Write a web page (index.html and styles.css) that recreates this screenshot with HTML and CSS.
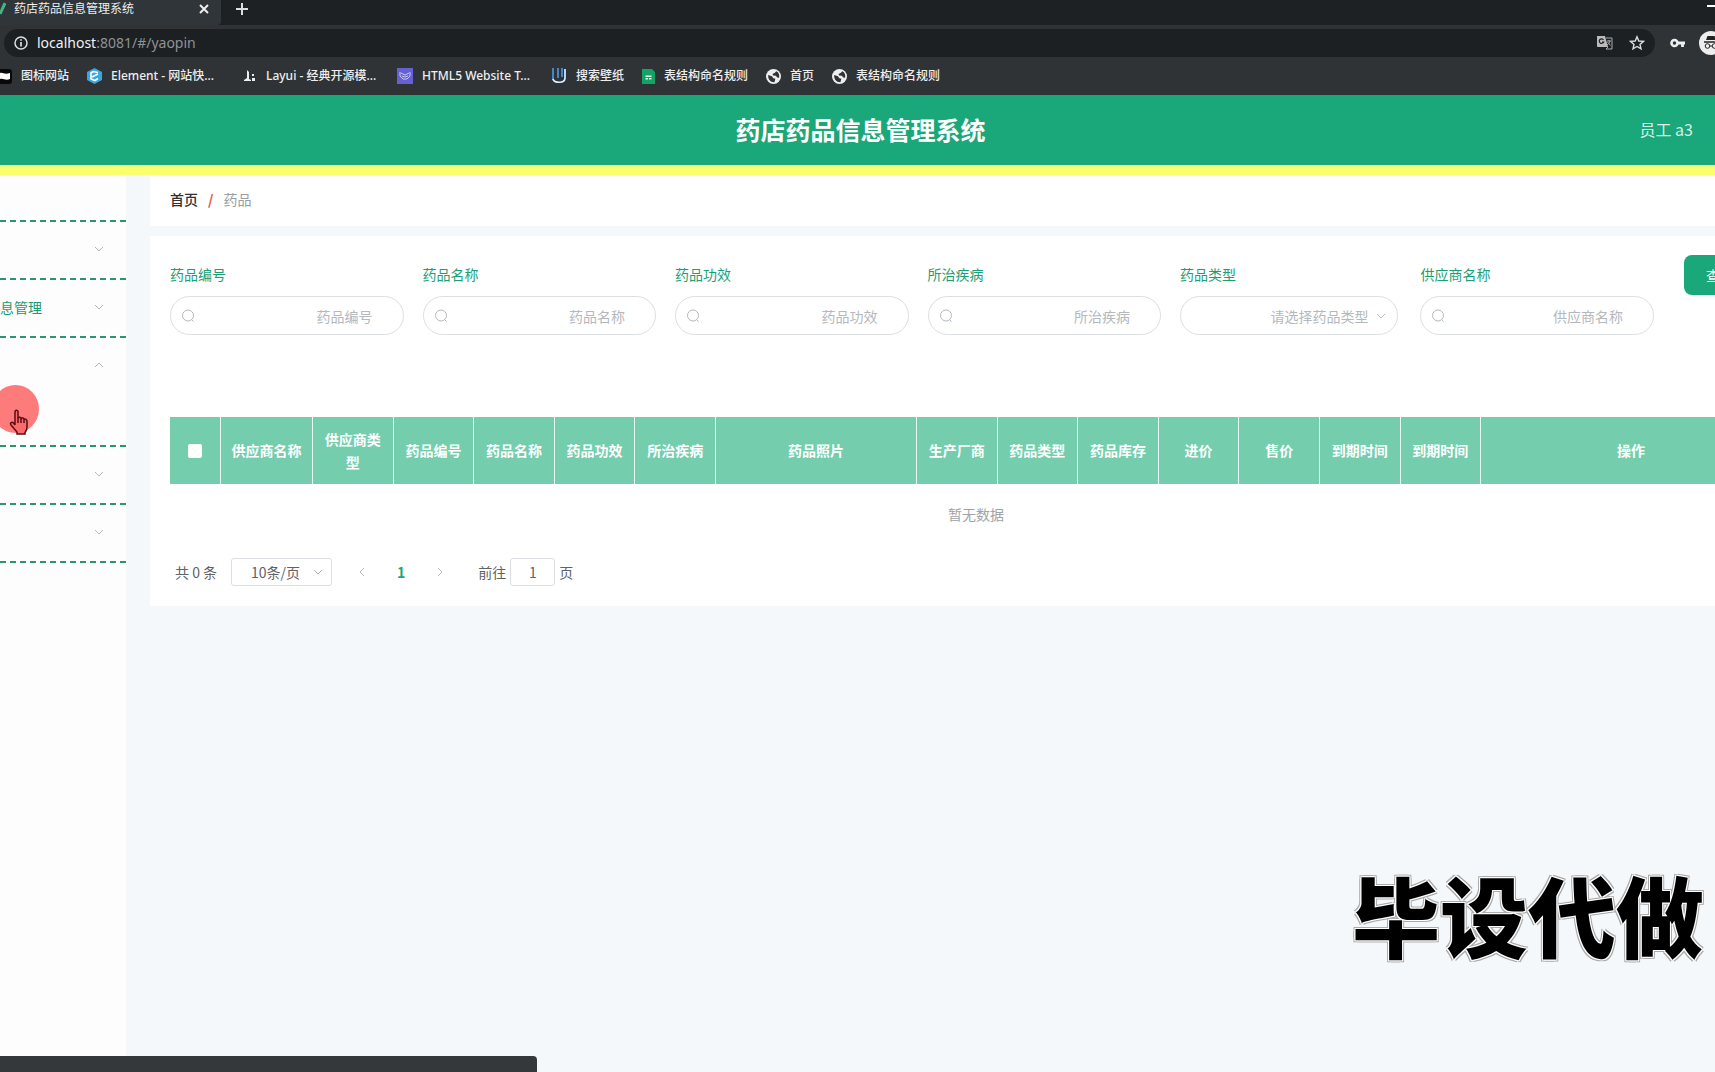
FILE: index.html
```html
<!DOCTYPE html>
<html lang="zh-CN">
<head>
<meta charset="utf-8">
<meta name="viewport" content="width=device-width, initial-scale=1">
<title>药店药品信息管理系统</title>
<link rel="stylesheet" href="styles.css">
</head>
<body>
<svg class="defs" aria-hidden="true">
  <symbol id="chev" viewBox="0 0 10 10"><path d="M1 3l4 4 4-4" fill="none" stroke="currentColor"/></symbol>
  <symbol id="search" viewBox="0 0 14 14"><circle cx="7" cy="6.500" r="5.500" fill="none" stroke="currentColor"/><path d="M10.500 10.500l2 2" stroke="currentColor"/></symbol>
  <symbol id="globe" viewBox="0 0 16 16"><circle cx="8" cy="8" r="8" fill="#eee"/><path d="M2.300 6.500l4 1.200 1.500 2.200 2.200.6-1 3.700C5 14.500 2 11.500 2.300 6.500zM11 2.400L9.500 4 7 5.200 7.500 7l3 .3 1.500 1.700 2 .3c.6-3-.5-5.700-3-6.900z" fill="#303336"/></symbol>
</svg>

<div class="browser">
  <div class="tabs">
    <div class="tab">
      <svg class="vue" viewBox="0 0 6 14"><path d="M5 1L0 12" stroke="#41b883" stroke-width="3"/></svg>
      <span class="tab-title">药店药品信息管理系统</span>
      <button class="tool" aria-label="关闭标签页"><svg width="10" height="10" viewBox="0 0 10 10"><path d="M1 1l8 8M9 1L1 9" stroke="#eee" stroke-width="2"/></svg></button>
    </div>
    <button class="tool plus" aria-label="新标签页"><svg width="14" height="14" viewBox="0 0 14 14"><path d="M7 1v12M1 7h12" stroke="#ddd" stroke-width="2"/></svg></button>
    <button class="tool minimise" aria-label="最小化"><svg width="8" height="2"><path d="M0 1h8" stroke="#fff" stroke-width="2"/></svg></button>
  </div>
  <div class="toolbar">
    <div class="address">
      <svg width="14" height="14" viewBox="0 0 14 14"><circle cx="7" cy="7" r="6" fill="none" stroke="#ddd" stroke-width="1.500"/><path d="M7 6v4.500M7 3.200v1.600" stroke="#ddd" stroke-width="1.700"/></svg>
      <span class="url"><b>localhost</b>:8081/#/yaopin</span>
      <svg class="translate" width="16" height="16" viewBox="0 0 16 16"><path d="M0 1h8l3 11H1a1 1 0 0 1-1-1z" fill="#bbb"/><path d="M9 3h6v11H9l2-2M10 6h4M12 5v1M13 6c-.5 2-1.500 3-3 4M10.500 7l3 3.500" fill="none" stroke="#aaa"/><path d="M6.500 4.800a2.300 2.300 0 1 0 .2 2.200H5" fill="none" stroke="#222" stroke-width="1.200"/></svg>
      <svg width="16" height="16" viewBox="0 0 16 16"><path d="M8 1.800l1.800 4.200 4.700.4-3.500 3 1 4.500L8 11.500l-4 2.400 1-4.500-3.500-3L6.200 6z" fill="none" stroke="#ddd" stroke-width="1.400"/></svg>
    </div>
    <svg class="key" width="16" height="10" viewBox="0 0 16 10"><circle cx="4.500" cy="5" r="3" fill="none" stroke="#eee" stroke-width="2.600"/><path d="M7 5h8M12.500 5v4" stroke="#eee" stroke-width="2.800"/></svg>
    <svg class="incognito" width="24" height="24" viewBox="0 0 24 24"><circle cx="12" cy="12" r="12" fill="#eee"/><path d="M7 9l1.500-4h7L17 9z" fill="#222"/><path d="M5 11h14" stroke="#222" stroke-width="1.500"/><circle cx="8.500" cy="15" r="2.300" fill="none" stroke="#222"/><circle cx="15.500" cy="15" r="2.300" fill="none" stroke="#222"/><path d="M10.800 15h2.400" stroke="#222"/></svg>
  </div>
  <nav class="bookmarks" aria-label="书签">
    <a href="#"><svg width="12" height="15" viewBox="0 0 12 15"><rect x="-3" width="15" height="15" rx="3" fill="#080808"/><path d="M0 4c3-1 4 2 10 0v6c-5 2-6-1-10 0z" fill="#fff"/></svg>图标网站</a>
    <a href="#" class="long"><svg width="15" height="16" viewBox="0 0 15 16"><path d="M7.500 0L15 4v8l-7.500 4L0 12V4z" fill="#3aa6e0"/><path d="M11 4.500L6 3.500 4 5v6l4 1.500 3-2M5 9l6-3" fill="none" stroke="#fff" stroke-width="1.600"/></svg>Element - 网站快...</a>
    <a href="#" class="long"><svg width="15" height="12" viewBox="0 0 15 12"><path d="M5 0l2 2v7l2 1v1H2v-1l3-2zM10 4h2v2h-2zM10 8h3v3h-3z" fill="#eee"/></svg>Layui - 经典开源模...</a>
    <a href="#" class="long"><svg width="16" height="16" viewBox="0 0 16 16"><path d="M0 0h16v16H0z" fill="#6560d4"/><path d="M3 4v4l3 3h4l3-3V4M4 5l4 2 4-2M5 8l3 1 3-1" fill="none" stroke="#c9c8ff"/></svg>HTML5 Website T...</a>
    <a href="#"><svg width="15" height="16" viewBox="0 0 15 16"><path d="M1 0v12M6 0v10M10 0v9" stroke="#4286c9" stroke-width="2"/><path d="M1 11c1 4 12 5 12-1V1" fill="none" stroke="#ddeeff" stroke-width="1.700"/></svg>搜索壁纸</a>
    <a href="#"><svg width="13" height="15" viewBox="0 0 13 15"><path d="M0 0h10l3 3v12H0z" fill="#11a464"/><path d="M3 6h7v5H3zM3 8.500h7M6.500 8v3" fill="#dff8e8" stroke="#11a464"/></svg>表结构命名规则</a>
    <a href="#"><svg width="15" height="15"><use href="#globe"/></svg>首页</a>
    <a href="#"><svg width="15" height="15"><use href="#globe"/></svg>表结构命名规则</a>
  </nav>
</div>

<header class="header">
  <h1>药店药品信息管理系统</h1>
  <span class="user">员工 a3</span>
</header>

<div class="layout">
  <nav class="side" aria-label="菜单">
    <ul>
      <li class="home"></li>
      <li><button aria-label="展开"><span></span><svg class="chev"><use href="#chev"/></svg></button></li>
      <li><button><span>息管理</span><svg class="chev"><use href="#chev"/></svg></button></li>
      <li class="open"><button aria-label="收起"><span></span><svg class="chev"><use href="#chev"/></svg></button></li>
      <li><button aria-label="展开"><span></span><svg class="chev"><use href="#chev"/></svg></button></li>
      <li><button aria-label="展开"><span></span><svg class="chev"><use href="#chev"/></svg></button></li>
    </ul>
  </nav>

  <main class="main">
    <nav class="crumbs" aria-label="面包屑"><a href="#">首页</a><i>/</i><span>药品</span></nav>
    <section class="card">
      <form class="filters">
        <div class="field"><label for="code">药品编号</label><div class="box"><svg class="mag"><use href="#search"/></svg><input id="code" placeholder="药品编号"></div></div>
        <div class="field"><label for="name">药品名称</label><div class="box"><svg class="mag"><use href="#search"/></svg><input id="name" placeholder="药品名称"></div></div>
        <div class="field"><label for="effect">药品功效</label><div class="box"><svg class="mag"><use href="#search"/></svg><input id="effect" placeholder="药品功效"></div></div>
        <div class="field"><label for="illness">所治疾病</label><div class="box"><svg class="mag"><use href="#search"/></svg><input id="illness" placeholder="所治疾病"></div></div>
        <div class="field narrow"><label for="type">药品类型</label><div class="box"><select id="type"><option>请选择药品类型</option></select><svg class="chev"><use href="#chev"/></svg></div></div>
        <div class="field"><label for="supplier">供应商名称</label><div class="box"><svg class="mag"><use href="#search"/></svg><input id="supplier" placeholder="供应商名称"></div></div>
        <button class="query" type="button">查询</button>
      </form>

      <table class="grid">
        <colgroup><col class="c-check"><col class="c-supplier"><col span="5" class="c-std"><col class="c-photo"><col span="7" class="c-std"><col></colgroup>
        <thead><tr>
          <th><input type="checkbox" aria-label="全选"></th><th>供应商名称</th><th>供应商类型</th><th>药品编号</th><th>药品名称</th><th>药品功效</th><th>所治疾病</th><th>药品照片</th><th>生产厂商</th><th>药品类型</th><th>药品库存</th><th>进价</th><th>售价</th><th>到期时间</th><th>到期时间</th><th>操作</th>
        </tr></thead>
        <tbody><tr><td colspan="16">暂无数据</td></tr></tbody>
      </table>

      <div class="pager">
        <span>共 0 条</span>
        <div class="size"><select aria-label="每页条数"><option>10条/页</option></select><svg class="chev"><use href="#chev"/></svg></div>
        <button class="prev" aria-label="上一页"><svg class="chev"><use href="#chev"/></svg></button>
        <button class="current">1</button>
        <button class="next" aria-label="下一页"><svg class="chev"><use href="#chev"/></svg></button>
        <label class="jump">前往<input value="1">页</label>
      </div>
    </section>
  </main>
</div>

<div class="pointer"><svg width="20" height="26" viewBox="0 0 20 26"><path d="M6 16V3c0-2.500 3-2.500 3 0v6c1-1 3-1 3 .5 1-1 3-.5 3 1 1-1 3 0 3 1.500v6c0 3-1 4-2 5.500V25H8v-2l-6-7c-1.500-2 1-3.500 2.500-2L6 16M9 9v5M12 9.500V14M15 10.500V14" fill="#fa6c6c" stroke="#5c0d12" stroke-width="1.500"/></svg></div>
<div class="watermark">毕设代做</div>
<div class="status"></div>
</body>
</html>
```
FILE: styles.css
```css
* { box-sizing: border-box; }

body {
  margin: 0;
  min-height: 100vh;
  display: flex;
  flex-direction: column;
  overflow: hidden;
  position: relative;
  background: #f5f8fa;
  color: #606266;
  font: 14px/20px "Noto Sans CJK SC", sans-serif;
}

button, input, select { font: inherit; color: inherit; }
button { border: 0; padding: 0; background: none; }
input, select { min-width: 0; outline: 0; }
select { appearance: none; }
svg { flex: none; display: block; }
ul { list-style: none; margin: 0; padding: 0; }
.defs { position: absolute; width: 0; height: 0; }
.chev { width: 10px; height: 10px; color: #b4b8bd; }

/* browser chrome */
.browser {
  background: #303336;
  color: #eceef0;
  font-family: "Noto Sans", "Noto Sans CJK SC", sans-serif;
}
.tabs { display: flex; height: 25px; background: #1d2123; }
.tab {
  display: flex;
  align-items: center;
  width: 221px;
  padding: 0 12px 8px 0;
  background: #303539;
  border-bottom-right-radius: 4px;
}
.vue { width: 6px; height: 14px; }
.tab-title { flex: 1; padding-left: 8px; font-size: 12px; line-height: 16px; }
.plus { padding: 0 0 8px 14px; }
.minimise { margin-left: auto; padding-bottom: 14px; }
.toolbar { display: flex; align-items: center; height: 36px; }
.address {
  flex: 1;
  display: flex;
  align-items: center;
  gap: 16px;
  height: 28px;
  margin-left: 4px;
  padding: 0 10px;
  border-radius: 14px;
  background: #1c2023;
}
.url { flex: 1; margin-left: -7px; font-size: 14px; color: #8d9296; }
.url b { font-weight: 400; color: #f0f2f3; }
.key { margin-left: 15px; }
.incognito { margin: 0 -8px 0 13px; }
.bookmarks {
  display: flex;
  gap: 18px;
  height: 34px;
  padding-bottom: 4px;
  font-size: 12px;
  font-weight: 500;
}
.bookmarks a {
  display: flex;
  align-items: center;
  gap: 9px;
  color: inherit;
  text-decoration: none;
  white-space: nowrap;
}
.bookmarks .long { width: 137px; }

/* page header */
.header {
  display: grid;
  grid-template-columns: 1fr auto 1fr;
  align-items: center;
  height: 80px;
  padding: 0 22px 2px 28px;
  background: #1aa779;
  border-bottom: 10px solid #faff6e;
  color: #fff;
}
.header h1 { grid-column: 2; margin: 0; font-size: 25px; line-height: 36px; }
.user { justify-self: end; font-size: 16px; color: #d5f1e6; }

/* side menu */
.layout { flex: 1; display: flex; min-width: 0; }
.side { flex: none; width: 126px; background: #fdfdfe; }
.side li {
  height: 58px;
  background: repeating-linear-gradient(to left, #2b9470 0 6px, transparent 6px 10px) bottom / 100% 2px no-repeat;
}
.side .home { height: 47px; }
.side .open { height: 109px; }
.side button {
  display: flex;
  align-items: center;
  justify-content: space-between;
  width: 100%;
  height: 54px;
  padding-right: 22px;
  color: #1a9a70;
}
.open .chev { transform: rotate(180deg); }

/* content */
.main { flex: 1; min-width: 0; margin: 0 -87px 0 24px; }
.crumbs {
  display: flex;
  gap: 10px;
  height: 51px;
  padding: 14px 20px;
  background: #fff;
}
.crumbs a { color: #303133; font-weight: 500; text-decoration: none; }
.crumbs i { color: #e8504a; font-style: normal; font-weight: 700; }
.crumbs span { color: #9a9da3; }
.card { margin-top: 10px; padding: 19px 20px 20px; background: #fff; }

.filters { display: flex; gap: 19px; margin-bottom: 82px; }
.field { flex: 233 1 0; min-width: 0; }
.narrow { flex-grow: 218; margin-right: 3px; }
.field label { display: block; padding: 9px 0 12px; color: #1aa076; }
.box {
  display: flex;
  align-items: center;
  height: 39px;
  padding: 0 15px 0 10px;
  border: 1px solid #dcdfe2;
  border-radius: 20px;
  color: #b5b8bd;
}
.box input { flex: 1; width: 0; border: 0; padding: 0 15px 0 0; background: none; text-align: right; }
.box input::placeholder { color: #b5b8bd; }
.box select { flex: 1; border: 0; padding: 0 8px; background: none; text-align-last: right; }
.box .chev { margin-right: -4px; }
.mag { width: 14px; height: 14px; }
.query {
  flex: none;
  width: 98px;
  height: 40px;
  margin-left: 11px;
  padding-left: 22px;
  border-radius: 8px;
  background: #1aa779;
  color: #fff;
  text-align: left;
}

.grid { width: 100%; table-layout: fixed; border-collapse: separate; border-spacing: 0; text-align: center; }
.c-check { width: 51px; }
.c-supplier { width: 92px; }
.c-std { width: 5%; }
.c-photo { width: 201px; }
.grid th {
  height: 67px;
  padding: 0 10px;
  background: #74ceae;
  border-right: 1px solid #e9fff6;
  color: #fff;
  line-height: 23px;
}
.grid th:nth-child(2) { padding: 0 8px; }
.grid th input {
  appearance: none;
  display: block;
  width: 14px;
  height: 14px;
  margin: 0 auto;
  border-radius: 2px;
  background: #fff;
}
.grid td { height: 60px; padding: 0; color: #a0a3a7; }

.pager { display: flex; align-items: center; height: 28px; margin: 14px 0 0 5px; }
.size {
  display: flex;
  align-items: center;
  width: 101px;
  height: 28px;
  margin-left: 14px;
  padding-right: 8px;
  border: 1px solid #dcdfe6;
  border-radius: 3px;
}
.size select { flex: 1; border: 0; padding: 0 0 0 6px; background: none; text-align-last: center; }
.pager .prev { margin-left: 25px; }
.pager .current { margin: 0 30px; color: #1aa779; font-weight: 700; }
.prev .chev { transform: rotate(90deg); }
.next .chev { transform: rotate(-90deg); }
.jump { display: flex; align-items: center; gap: 4px; margin-left: 33px; }
.jump input { width: 45px; height: 28px; padding: 0; border: 1px solid #dcdfe6; border-radius: 3px; background: none; text-align: center; }

/* overlays */
.pointer {
  position: absolute;
  left: -8px;
  top: 385px;
  width: 47px;
  height: 48px;
  padding: 24px 0 0 17px;
  border-radius: 50%;
  background: #fd7b7b;
}
.watermark {
  position: absolute;
  right: 11px;
  bottom: 95px;
  color: #000;
  font-size: 88px;
  font-weight: 900;
  line-height: 128px;
  text-shadow: 1px 1px 0 #fff, -1px -1px 0 #fff, 1px -1px 0 #fff, -1px 1px 0 #fff, 2px 2px 0 #aaa, -2px -2px 0 #aaa, 2px -2px 0 #aaa, -2px 2px 0 #aaa;
}
.status {
  position: absolute;
  left: 0;
  bottom: 0;
  width: 537px;
  height: 16px;
  border-top-right-radius: 4px;
  background: #35383a;
}
```
